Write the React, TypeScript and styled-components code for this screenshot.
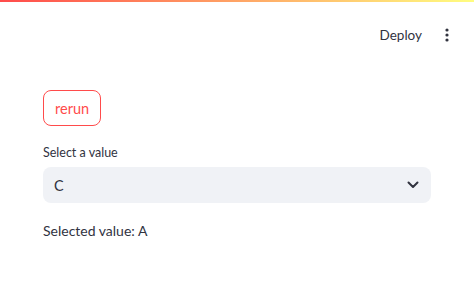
import React from "react";
import styled, { createGlobalStyle } from "styled-components";

const Global = createGlobalStyle`
  html, body { margin: 0; padding: 0; background: #ffffff; }
  body { font-family: "Source Sans Pro", "Lato", "Noto Sans", sans-serif; color: rgb(49, 51, 63); }
  * { box-sizing: border-box; }
`;

const Page = styled.div`
  width: 474px;
  height: 284px;
  display: flex;
  flex-direction: column;
  overflow: hidden;
`;

const Decoration = styled.div`
  height: 2px;
  background: linear-gradient(90deg, rgb(255, 75, 75), rgb(255, 253, 128));
`;

const Header = styled.header`
  height: 58px;
  display: flex;
  align-items: center;
  justify-content: flex-end;
  padding: 8px 15px 0 0;
  gap: 13px;
`;

const HeaderButton = styled.button`
  border: none;
  background: transparent;
  font-family: inherit;
  font-size: 13.5px;
  color: rgb(49, 51, 63);
  padding: 4px 0;
  cursor: pointer;
`;

const Kebab = styled.button`
  border: none;
  background: transparent;
  width: 24px;
  height: 24px;
  display: flex;
  align-items: center;
  justify-content: center;
  padding: 0;
  color: rgb(49, 51, 63);
`;

const Main = styled.main`
  padding: 30px 43px 0 43px;
  display: flex;
  flex-direction: column;
`;

const RerunButton = styled.button`
  align-self: flex-start;
  height: 36px;
  padding: 0 11px;
  border: 1px solid rgb(255, 75, 75);
  border-radius: 8px;
  background: #ffffff;
  color: rgb(255, 75, 75);
  font-family: inherit;
  font-size: 14.5px;
  cursor: pointer;
`;

const Field = styled.div`
  margin-top: 18px;
  display: flex;
  flex-direction: column;
`;

const Label = styled.label`
  font-size: 12.5px;
  line-height: 18px;
  margin-bottom: 5px;
`;

const SelectBox = styled.div`
  width: 388px;
  height: 36px;
  border-radius: 8px;
  background: rgb(240, 242, 246);
  display: flex;
  align-items: center;
  justify-content: space-between;
  padding: 0 12px 0 11px;
  font-size: 14.5px;
`;

const Result = styled.p`
  margin: 17px 0 0 0;
  font-size: 14px;
  line-height: 22px;
`;

export default function App() {
  return (
    <Page>
      <Global />
      <Decoration />
      <Header>
        <HeaderButton>Deploy</HeaderButton>
        <Kebab aria-label="menu">
          <svg width="4" height="14" viewBox="0 0 4 14">
            <circle cx="2" cy="2" r="1.6" fill="currentColor" />
            <circle cx="2" cy="7" r="1.6" fill="currentColor" />
            <circle cx="2" cy="12" r="1.6" fill="currentColor" />
          </svg>
        </Kebab>
      </Header>
      <Main>
        <RerunButton>rerun</RerunButton>
        <Field>
          <Label>Select a value</Label>
          <SelectBox>
            <span>C</span>
            <svg width="12" height="8" viewBox="0 0 12 8">
              <path d="M1.5 1.5 L6 6 L10.5 1.5" fill="none" stroke="rgb(49,51,63)" strokeWidth="2" strokeLinecap="round" strokeLinejoin="round" />
            </svg>
          </SelectBox>
        </Field>
        <Result>Selected value: A</Result>
      </Main>
    </Page>
  );
}
